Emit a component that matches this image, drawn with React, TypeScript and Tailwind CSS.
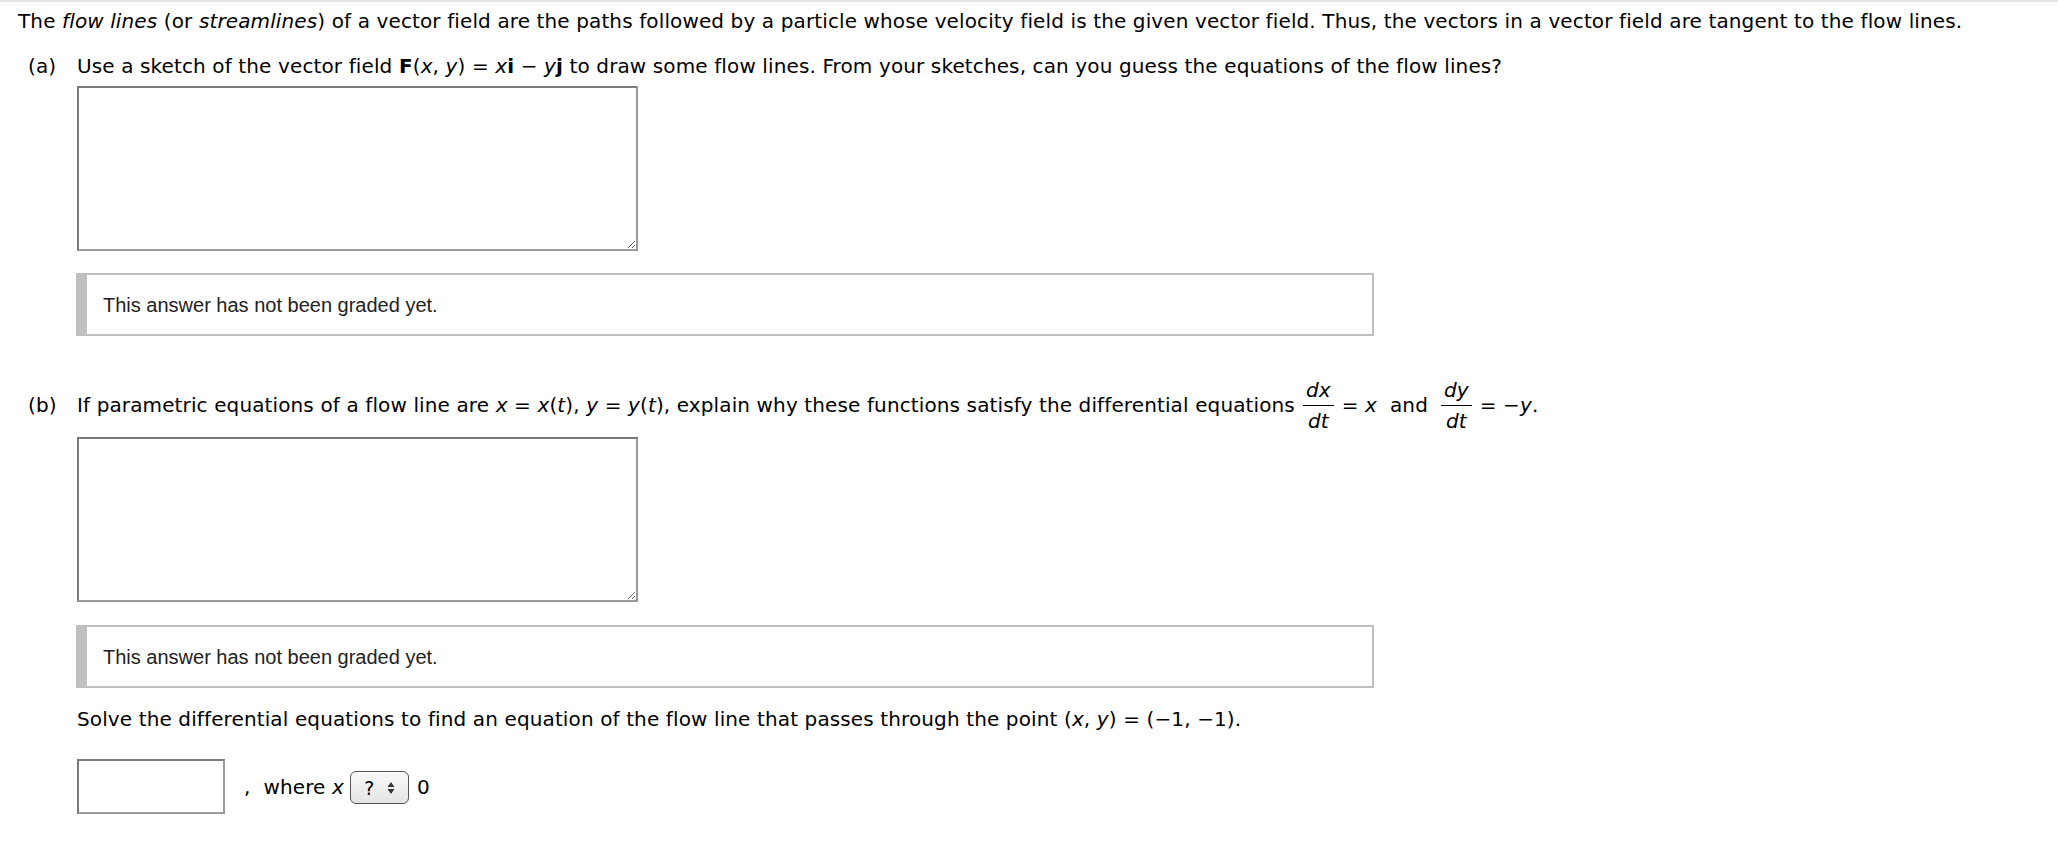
import React from "react";

const Frac = ({ n, d, cls }: { n: React.ReactNode; d: React.ReactNode; cls: string }) => (
  <span className={"inline-flex flex-col items-center " + cls}>
    <span className="italic leading-[26px] pb-[2px] px-[3px]">{n}</span>
    <span className="h-px w-full bg-black" />
    <span className="italic leading-[26px] pt-[2px] px-[3px]">{d}</span>
  </span>
);

const Graded = () => (
  <div className="flex h-[63px] w-[1298px] ml-[-1px] border-y-2 border-r-2 border-[#c0c0c0] border-l-[11px] tracking-normal">
    <div className="flex items-center pl-[16px] font-['Liberation_Sans',Arial,sans-serif] text-[20px] leading-[24px] text-[#222]">
      This answer has not been graded yet.
    </div>
  </div>
);

const Area = () => (
  <textarea className="block w-[561px] h-[165px] border-2 border-[#9a9a9a] border-t-[#7a7a7a] border-l-[#7a7a7a] bg-white outline-none" />
);

export default function App() {
  return (
    <div className="min-h-[852px] bg-white border-t-2 border-[#e2e2e2] pl-[18px] pt-[6px] font-['DejaVu_Sans',Verdana,sans-serif] text-[20px] leading-[26px] tracking-[0.12px] text-black">
      <p className="whitespace-nowrap">
        The <i>flow lines</i> (or <i>streamlines</i>) of a vector field are the paths followed by a particle whose velocity field is the given vector field. Thus, the vectors in a vector field are tangent to the flow lines.
      </p>

      <div className="flex mt-[19px] pl-[10px]">
        <div className="w-[49px] shrink-0">(a)</div>
        <div>
          <p className="whitespace-nowrap">
            Use a sketch of the vector field <b>F</b>(<i>x</i>, <i>y</i>) = <i>x</i><b>i</b> − <i>y</i><b>j</b> to draw some flow lines. From your sketches, can you guess the equations of the flow lines?
          </p>
          <div className="mt-[7px]">
            <Area />
          </div>
          <div className="mt-[22px]">
            <Graded />
          </div>
        </div>
      </div>

      <div className="flex mt-[40px] pl-[10px]">
        <div className="w-[49px] shrink-0 h-[58px] flex items-center">(b)</div>
        <div>
          <div className="h-[58px] flex items-center whitespace-nowrap">
            <span>
              If parametric equations of a flow line are <i>x</i> = <i>x</i>(<i>t</i>), <i>y</i> = <i>y</i>(<i>t</i>), explain why these functions satisfy the differential equations
            </span>
            <Frac n="dx" d="dt" cls="ml-[8px] mr-[8px]" />
            <span>
              = <i>x</i>&nbsp;&nbsp;and
            </span>
            <Frac n="dy" d="dt" cls="ml-[13px] mr-[8px]" />
            <span>
              = −<i>y</i>.
            </span>
          </div>
          <div className="mt-[3px]">
            <Area />
          </div>
          <div className="mt-[23px]">
            <Graded />
          </div>
          <p className="mt-[18px] whitespace-nowrap">
            Solve the differential equations to find an equation of the flow line that passes through the point (<i>x</i>, <i>y</i>) = (−1, −1).
          </p>
          <div className="mt-[27px] flex items-center">
            <input className="block w-[148px] h-[55px] border-2 border-[#9a9a9a] border-t-[#7a7a7a] border-l-[#7a7a7a] bg-white outline-none" />
            <span className="ml-[19px] whitespace-pre">,  where <i>x</i></span>
            <div className="ml-[6px] mt-[2px] flex items-center justify-center gap-[12px] w-[59px] h-[33px] rounded-[6px] border border-[#555] bg-gradient-to-b from-[#fafafa] to-[#e4e4e4] text-[19px]">
              <span>?</span>
              <svg width="8" height="14" viewBox="0 0 8 14">
                <polygon points="4,1 7.5,6 0.5,6" fill="#333" />
                <polygon points="0.5,8 7.5,8 4,13" fill="#333" />
              </svg>
            </div>
            <span className="ml-[8px]">0</span>
          </div>
        </div>
      </div>
    </div>
  );
}
